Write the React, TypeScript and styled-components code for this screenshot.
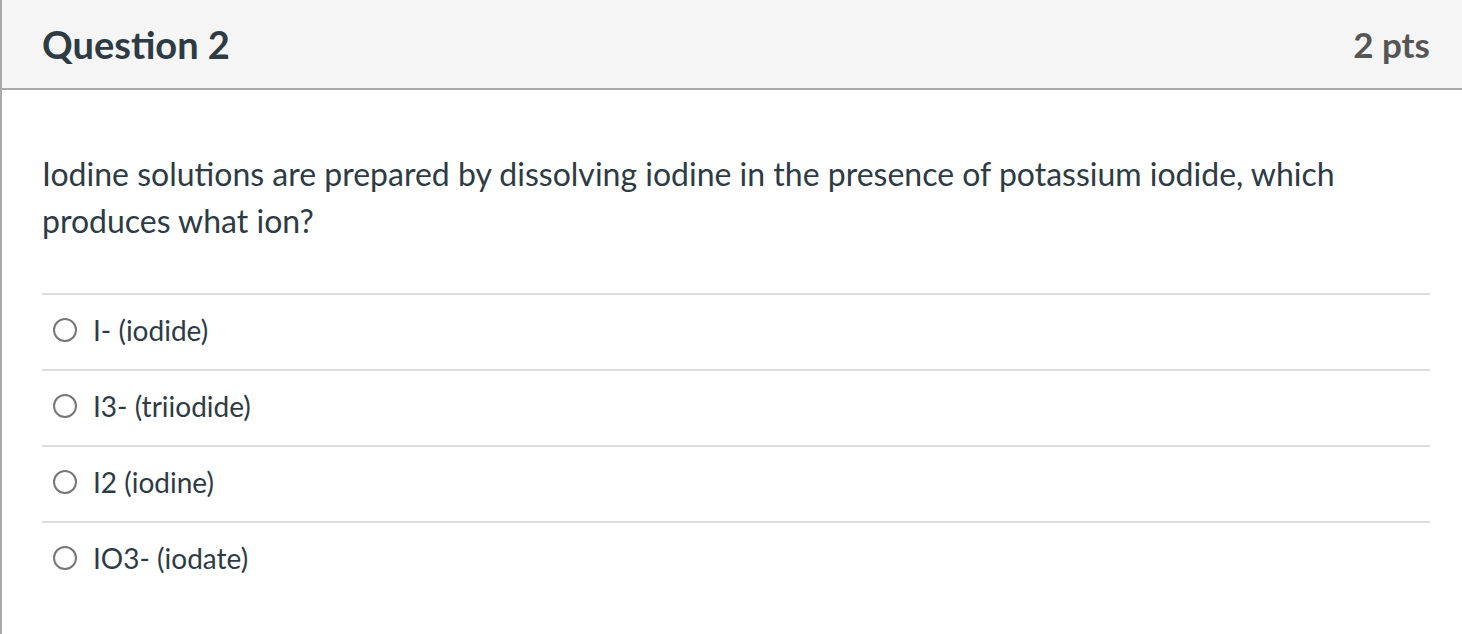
import { createGlobalStyle } from 'styled-components';
import styled from 'styled-components';

const GlobalStyle = createGlobalStyle`
  html, body {
    margin: 0;
    padding: 0;
    background: #ffffff;
  }
  body {
    font-family: Lato, 'Helvetica Neue', Arial, sans-serif;
    color: #2d3b45;
  }
`;

const Card = styled.div`
  border-left: 2px solid #aaaaaa;
  min-height: 634px;
  box-sizing: border-box;
`;

const Header = styled.div`
  display: flex;
  align-items: center;
  justify-content: space-between;
  height: 88px;
  padding: 0 32px 0 40px;
  background: #f5f5f5;
  border-bottom: 2px solid #aaaaaa;
`;

const Title = styled.h2`
  margin: 0;
  font-size: 38px;
  font-weight: 700;
  color: #2d3b45;
`;

const Points = styled.span`
  font-size: 35px;
  font-weight: 700;
  color: #555555;
`;

const Body = styled.div`
  padding: 60px 32px 0 40px;
`;

const Prompt = styled.p`
  margin: 0 0 49px;
  font-size: 32px;
  line-height: 47px;
`;

const Answers = styled.div`
  display: flex;
  flex-direction: column;
`;

const Answer = styled.label`
  display: flex;
  align-items: center;
  gap: 16px;
  box-sizing: border-box;
  height: 76px;
  padding: 0 0 4px 11px;
  border-top: 2px solid #dddddd;
  font-size: 28px;
`;

const Radio = styled.span`
  width: 20px;
  height: 20px;
  border: 2px solid #777777;
  border-radius: 50%;
  flex-shrink: 0;
`;

const options = ['I- (iodide)', 'I3- (triiodide)', 'I2 (iodine)', 'IO3- (iodate)'];

const App = () => {
  return (
    <Card>
      <GlobalStyle />
      <Header>
        <Title>Question 2</Title>
        <Points>2 pts</Points>
      </Header>
      <Body>
        <Prompt>
          Iodine solutions are prepared by dissolving iodine in the presence of potassium iodide, which
          produces what ion?
        </Prompt>
        <Answers>
          {options.map((opt) => (
            <Answer key={opt}>
              <Radio />
              {opt}
            </Answer>
          ))}
        </Answers>
      </Body>
    </Card>
  );
};

export default App;
